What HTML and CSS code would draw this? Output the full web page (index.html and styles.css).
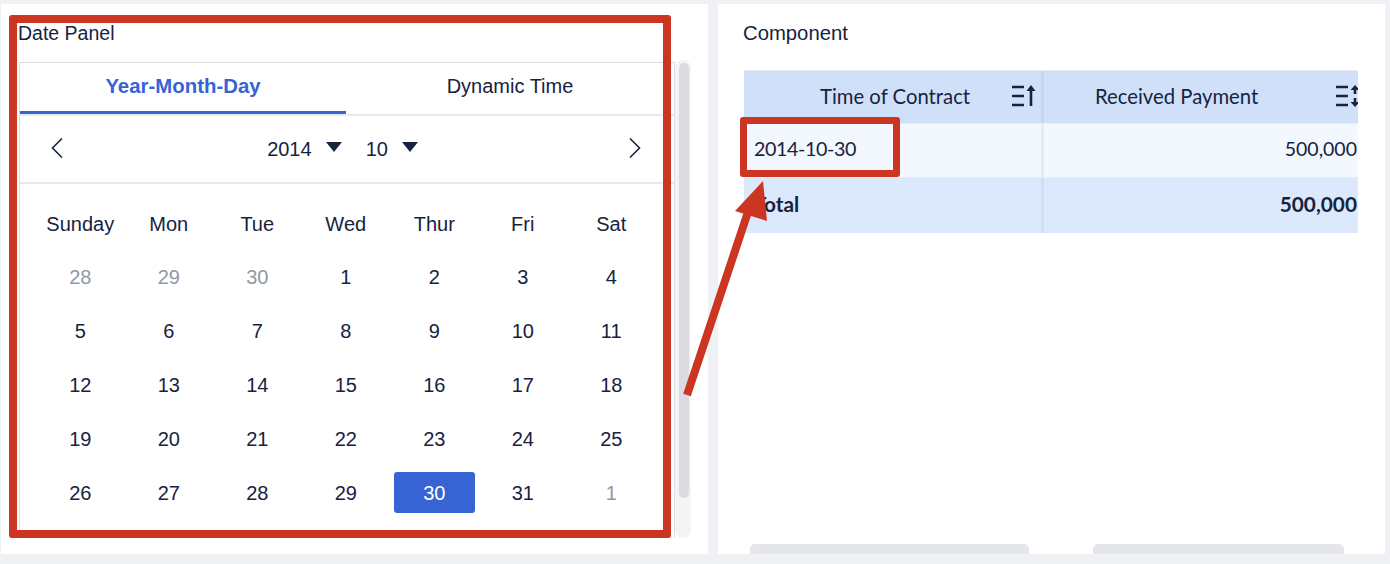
FILE: index.html
```html
<!DOCTYPE html>
<html lang="en">
<head>
    <meta charset="UTF-8">
    <meta name="viewport" content="width=device-width, initial-scale=1.0">
    <title>Date Panel</title>
    <link rel="stylesheet" href="styles.css">
</head>
<body>
    <div class="page">
        <div class="panel date-panel">
            <div class="panel-title">Date Panel</div>
            <div class="date-body">
                <div class="calendar">
                    <div class="tabs">
                        <div class="tab active">Year-Month-Day</div>
                        <div class="tab">Dynamic Time</div>
                    </div>
                    <div class="month-nav">
                        <svg class="nav-arrow" width="14" height="22" viewBox="0 0 14 22"><path d="M12 1.5 L2.5 11 L12 20.5" fill="none" stroke="#16233f" stroke-width="1.6"/></svg>
                        <div class="month-picker">
                            <span>2014</span><span class="caret"></span>
                            <span class="month-value">10</span><span class="caret"></span>
                        </div>
                        <svg class="nav-arrow" width="14" height="22" viewBox="0 0 14 22"><path d="M2 1.5 L11.5 11 L2 20.5" fill="none" stroke="#16233f" stroke-width="1.6"/></svg>
                    </div>
                    <div class="days">
                        <div class="weekday">Sunday</div><div class="weekday">Mon</div><div class="weekday">Tue</div><div class="weekday">Wed</div><div class="weekday">Thur</div><div class="weekday">Fri</div><div class="weekday">Sat</div>
                        <div class="day muted">28</div><div class="day muted">29</div><div class="day muted">30</div><div class="day">1</div><div class="day">2</div><div class="day">3</div><div class="day">4</div>
                        <div class="day">5</div><div class="day">6</div><div class="day">7</div><div class="day">8</div><div class="day">9</div><div class="day">10</div><div class="day">11</div>
                        <div class="day">12</div><div class="day">13</div><div class="day">14</div><div class="day">15</div><div class="day">16</div><div class="day">17</div><div class="day">18</div>
                        <div class="day">19</div><div class="day">20</div><div class="day">21</div><div class="day">22</div><div class="day">23</div><div class="day">24</div><div class="day">25</div>
                        <div class="day">26</div><div class="day">27</div><div class="day">28</div><div class="day">29</div><div class="day"><span class="selected">30</span></div><div class="day">31</div><div class="day muted">1</div>
                    </div>
                </div>
                <div class="v-scroll"><div class="v-thumb"></div></div>
            </div>
        </div>

        <div class="panel component-panel">
            <div class="panel-title">Component</div>
            <div class="table-wrap">
                <div class="row head-row">
                    <div class="cell col-date head-date">
                        <span>Time of Contract</span>
                        <svg class="sort-icon" width="24" height="22" viewBox="0 0 24 22"><path d="M0 2h12M0 11h12M0 20h12" stroke="#16233f" stroke-width="2.4"/><path d="M19 21V4" stroke="#16233f" stroke-width="2.6"/><path d="M19 0l4.5 6h-9z" fill="#16233f"/></svg>
                    </div>
                    <div class="cell col-money head-money">
                        <span>Received Payment</span>
                        <svg class="sort-icon" width="24" height="22" viewBox="0 0 24 22"><path d="M0 2h12M0 11h12M0 20h12" stroke="#16233f" stroke-width="2.4"/><path d="M19 4v5M19 13v5" stroke="#16233f" stroke-width="2.6"/><path d="M19 0l4.5 5h-9zM19 22l-4.5-5h9z" fill="#16233f"/></svg>
                    </div>
                </div>
                <div class="row body-row">
                    <div class="cell col-date date-text">2014-10-30</div>
                    <div class="cell col-money num">500,000</div>
                </div>
                <div class="row total-row">
                    <div class="cell col-date">Total</div>
                    <div class="cell col-money num">500,000</div>
                </div>
            </div>
            <div class="h-scrolls">
                <div class="h-thumb first"></div>
                <div class="h-thumb second"></div>
            </div>
        </div>
    </div>

    <!-- annotations drawn over the screenshot -->
    <div class="mark mark-panel"></div>
    <div class="mark mark-cell"></div>
    <svg class="mark-arrow" width="1390" height="564" viewBox="0 0 1390 564">
        <path d="M687 395 L748 212" stroke="#cb3522" stroke-width="8" fill="none"/>
        <path d="M763 181 L735 211 L767 221 Z" fill="#cb3522"/>
    </svg>
</body>
</html>
```

FILE: styles.css
```css
* {
    box-sizing: border-box;
}
body {
    margin: 0;
    background-color: #eff1f5;
    color: #16233f;
    font-family: "Liberation Sans", Arial, sans-serif;
    height: 564px;
    overflow: hidden;
}
.page {
    display: flex;
    gap: 10px;
    padding: 4px 5px 0 1px;
    height: 554px;
}
.panel {
    background: #fff;
    height: 550px;
}
.date-panel {
    width: 707px;
    padding: 19px 0 0 18px;
}
.component-panel {
    width: 667px;
    padding: 19px 0 0 25px;
    position: relative;
}
.panel-title {
    font-size: 19.5px;
    line-height: 21px;
}
.date-panel .panel-title {
    margin-left: -1px;
}
.component-panel .panel-title {
    font-size: 20.3px;
}

/* calendar */
.date-body {
    display: flex;
    margin-top: 18px;
}
.calendar {
    width: 656px;
    height: 476px;
    border: 1px solid #d9dde4;
    border-bottom: 0;
}
.tabs {
    display: flex;
    height: 53px;
    border-bottom: 2px solid #e6e9ee;
}
.tab {
    font-size: 20px;
    line-height: 47px;
    text-align: center;
}
.tab.active {
    width: 326px;
    color: #3763d4;
    font-weight: bold;
    font-size: 20.4px;
    height: 51px;
    border-bottom: 3px solid #3763d4;
}
.tab:last-child {
    flex: 1;
}
.month-nav {
    display: flex;
    align-items: center;
    justify-content: space-between;
    height: 68px;
    padding: 0 32px 0 30px;
    border-bottom: 2px solid #e6e9ee;
}
.nav-arrow {
    margin-top: -2px;
}
.month-picker {
    display: flex;
    align-items: center;
    font-size: 20px;
    margin-left: -7px;
}
.month-value {
    margin-left: 24px;
}
.caret {
    width: 0;
    height: 0;
    margin: -4px 0 0 14px;
    border-left: 8px solid transparent;
    border-right: 8px solid transparent;
    border-top: 10px solid #16233f;
}
.days {
    display: grid;
    grid-template-columns: repeat(7, 88.5px);
    grid-template-rows: 53px repeat(5, 54px);
    padding: 13px 0 0 16px;
}
.weekday,
.day {
    display: flex;
    align-items: center;
    justify-content: center;
    font-size: 20px;
}
.weekday {
    padding-top: 2px;
}
.muted {
    color: #9198a6;
}
.selected {
    width: 81px;
    height: 41px;
    margin-top: -2px;
    line-height: 43px;
    text-align: center;
    color: #fff;
    background: #3763d4;
    border-radius: 3px;
}
.v-scroll {
    width: 16px;
    height: 478px;
    margin: -2px 0 0 0;
    padding: 3px 2px 0 4px;
    background: #f4f4f5;
    border-radius: 8px;
}
.v-thumb {
    height: 435px;
    background: #d9dbe1;
    border-radius: 6px;
}

/* table */
.table-wrap {
    width: 614px;
    margin: 26px 0 0 1px;
    overflow: hidden;
    font-family: Lato, sans-serif;
    font-size: 20.3px;
}
.row {
    display: flex;
    width: 660px;
}
.cell {
    display: flex;
    align-items: center;
    padding-bottom: 2px;
    border-right: 3px solid #c6d6ef;
}
.col-date {
    width: 300px;
    padding-left: 10px;
}
.col-money {
    width: 360px;
    border-right: 0;
    padding-right: 47px;
}
.head-row {
    height: 54px;
    background: #d0e0f9;
    border-top: 1px solid #e4ecfa;
    border-bottom: 1px solid #e4ecfa;
}
.head-date {
    padding-left: 76px;
    padding-right: 5px;
}
.head-money {
    padding-left: 51px;
    padding-right: 44px;
}
.sort-icon {
    margin-left: auto;
    flex: none;
}
.body-row {
    height: 54px;
    background: #f3f7fe;
    border-bottom: 1px solid #e4ecfa;
}
.body-row .cell {
    padding-bottom: 4px;
    border-right-color: #e6ebf3;
    font-size: 19.5px;
}
.body-row .date-text {
    font-size: 19.7px;
    letter-spacing: -0.4px;
}
.total-row {
    height: 55px;
    background: #dce8fb;
    font-weight: bold;
    font-size: 20.8px;
}
.total-row .cell {
    padding-bottom: 4px;
    border-right-color: #d0def5;
}
.num {
    justify-content: flex-end;
}
.h-scrolls {
    position: absolute;
    left: 32px;
    bottom: 0;
    display: flex;
    gap: 64px;
}
.h-thumb {
    height: 10px;
    background: #e5e6ea;
    border-radius: 5px 5px 0 0;
}
.h-thumb.first {
    width: 279px;
}
.h-thumb.second {
    width: 251px;
}

/* annotations */
.mark {
    position: absolute;
    border-style: solid;
    border-color: #cb3522;
    border-radius: 3px;
}
.mark-panel {
    left: 9px;
    top: 15px;
    width: 662px;
    height: 523px;
    border-width: 8px;
}
.mark-cell {
    left: 740px;
    top: 117px;
    width: 160px;
    height: 60px;
    border-width: 7px;
}
.mark-arrow {
    position: absolute;
    left: 0;
    top: 0;
}
```
